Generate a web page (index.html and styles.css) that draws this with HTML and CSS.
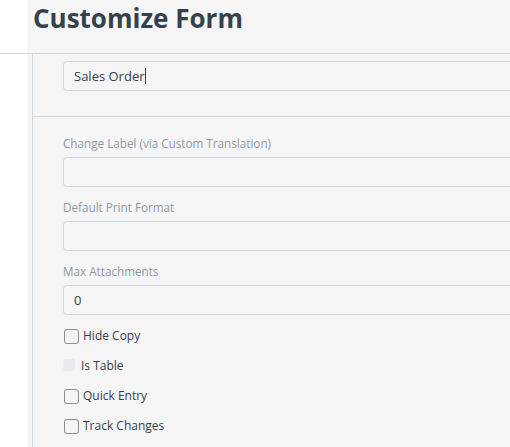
FILE: index.html
```html
<!DOCTYPE html>
<html>
<head>
<meta charset="utf-8">
<link rel="stylesheet" href="styles.css">
</head>
<body>
<div class="header">
  <div class="header-side"></div>
  <div class="header-main"><h1 class="title">Customize Form</h1></div>
</div>
<div class="layout">
  <div class="sidebar"></div>
  <div class="gutter"></div>
  <div class="panel">
    <div class="section first">
      <div class="input has-caret">Sales Order<span class="caret"></span></div>
    </div>
    <div class="section">
      <div class="field">
        <div class="label">Change Label (via Custom Translation)</div>
        <div class="input"></div>
      </div>
      <div class="field">
        <div class="label">Default Print Format</div>
        <div class="input"></div>
      </div>
      <div class="field">
        <div class="label">Max Attachments</div>
        <div class="input">0</div>
      </div>
      <div class="checks">
        <div class="check"><span class="box"></span><span class="check-label">Hide Copy</span></div>
        <div class="check disabled"><span class="box"></span><span class="check-label">Is Table</span></div>
        <div class="check"><span class="box"></span><span class="check-label">Quick Entry</span></div>
        <div class="check"><span class="box"></span><span class="check-label">Track Changes</span></div>
      </div>
    </div>
  </div>
</div>
</body>
</html>
```
FILE: styles.css
```css
html, body {
  margin: 0;
  padding: 0;
  background: #ffffff;
  overflow: hidden;
  font-family: "Open Sans", "Noto Sans", sans-serif;
  color: #36414c;
}
.header {
  display: flex;
  height: 53px;
  border-bottom: 1px solid #d1d8dd;
}
.header-side {
  flex: 0 0 27px;
  background: #ffffff;
}
.header-main {
  flex: 1;
  background: #f5f5f5;
  padding-left: 6px;
}
.title {
  margin: 0;
  font-size: 26px;
  font-weight: 700;
  line-height: 36px;
  color: #36414c;
}
.layout {
  display: flex;
  min-height: 400px;
}
.sidebar {
  flex: 0 0 27px;
  background: #ffffff;
}
.gutter {
  flex: 0 0 5px;
  background: #f5f5f5;
}
.panel {
  flex: 1;
  min-width: 0;
  overflow: hidden;
  background: #f5f5f5;
  border-left: 1px solid #d1d8dd;
}
.section {
  padding: 16px 0 0 30px;
}
.section.first {
  padding-top: 7px;
  padding-bottom: 25px;
  border-bottom: 1px solid #d1d8dd;
}
.input {
  box-sizing: border-box;
  width: calc(100% + 20px);
  height: 30px;
  border: 1px solid #d1d8dd;
  border-radius: 4px;
  padding: 0 10px;
  font-size: 13px;
  line-height: 28px;
  color: #36414c;
}
.caret {
  display: inline-block;
  width: 1px;
  height: 16px;
  background: #36414c;
  vertical-align: -3px;
}
.field {
  margin-bottom: 10px;
}
.label {
  font-size: 11.7px;
  line-height: 18px;
  color: #8d99a6;
  margin-bottom: 6px;
  position: relative;
  top: 1px;
}
.checks {
  padding-top: 0;
}
.check {
  display: flex;
  align-items: center;
  height: 20px;
  margin-bottom: 10px;
  font-size: 12px;
}
.box {
  box-sizing: border-box;
  flex: 0 0 15px;
  height: 15px;
  margin-left: 1px;
  margin-right: 4px;
  border: 1px solid #8d8d8d;
  border-radius: 3px;
  background: #f5f5f5;
  position: relative;
  top: 1px;
}
.check.disabled .box {
  flex: 0 0 12px;
  height: 12px;
  margin-left: 0;
  margin-right: 6px;
  border: none;
  background: #e8eaee;
  top: 0;
}
```
